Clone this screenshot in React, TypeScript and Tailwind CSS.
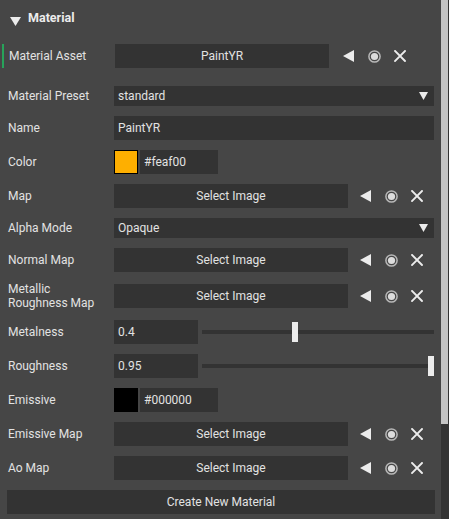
import React from 'react';

const font = { fontFamily: 'Roboto, "Liberation Sans", sans-serif' };

function PrevIcon() {
  return (
    <svg width="11" height="12" viewBox="0 0 11 12">
      <polygon points="11,0 11,12 0,6" fill="#ececec" />
    </svg>
  );
}

function PickIcon() {
  return (
    <svg width="13" height="13" viewBox="0 0 13 13">
      <circle cx="6.5" cy="6.5" r="5.6" fill="none" stroke="#b8b8b8" strokeWidth="1.5" />
      <circle cx="6.5" cy="6.5" r="3.6" fill="#dcdcdc" />
    </svg>
  );
}

function ClearIcon() {
  return (
    <svg width="12" height="12" viewBox="0 0 12 12">
      <path d="M1 1L11 11M11 1L1 11" stroke="#ececec" strokeWidth="1.9" strokeLinecap="square" />
    </svg>
  );
}

function AssetIcons() {
  return (
    <div className="flex shrink-0">
      <div className="w-[26px] flex justify-center items-center"><PrevIcon /></div>
      <div className="w-[26px] flex justify-center items-center"><PickIcon /></div>
      <div className="w-[26px] flex justify-center items-center"><ClearIcon /></div>
    </div>
  );
}

function Label({ children }: { children: React.ReactNode }) {
  return <div className="w-[106px] shrink-0 text-[12px] leading-[14px] text-[#e2e2e2]">{children}</div>;
}

function ImageRow({ label, tall }: { label: React.ReactNode; tall?: boolean }) {
  return (
    <div className={`flex items-center ${tall ? 'h-[28px]' : 'h-6'}`}>
      <Label>{label}</Label>
      <button className="flex-1 h-6 bg-[#333333] text-[12px] text-[#e2e2e2] text-center">Select Image</button>
      <div className="w-[86px] pl-[4px] flex">
        <AssetIcons />
      </div>
    </div>
  );
}

function SelectRow({ label, value }: { label: string; value: string }) {
  return (
    <div className="flex items-center h-5">
      <Label>{label}</Label>
      <div className="flex-1 h-5 bg-[#333333] flex items-center justify-between pl-1 pr-[6px] text-[12px] text-[#e2e2e2]">
        <span>{value}</span>
        <svg width="9" height="8" viewBox="0 0 9 8">
          <polygon points="0,0 9,0 4.5,8" fill="#ececec" />
        </svg>
      </div>
    </div>
  );
}

function ColorRow({ label, swatch, hex }: { label: string; swatch: string; hex: string }) {
  return (
    <div className="flex items-center h-6">
      <Label>{label}</Label>
      <div className={`w-6 h-6 border border-black ${swatch}`} />
      <div className="ml-[2px] w-[78px] h-6 bg-[#333333] flex items-center pl-1 text-[12px] text-[#e2e2e2]">{hex}</div>
    </div>
  );
}

function SliderRow({ label, value, thumb }: { label: string; value: string; thumb: string }) {
  return (
    <div className="flex items-center h-6">
      <Label>{label}</Label>
      <div className="w-[84px] h-6 bg-[#333333] flex items-center pl-1 text-[12px] text-[#e2e2e2]">{value}</div>
      <div className="flex-1 ml-[4px] relative h-5 flex items-center">
        <div className="w-full h-1 bg-[#333333]" />
        <div className={`absolute top-0 w-[6px] h-5 bg-[#ececec] ${thumb}`} />
      </div>
    </div>
  );
}

export default function App() {
  return (
    <div className="w-[449px] h-[519px] bg-[#464646] flex overflow-hidden" style={font}>
      <div className="flex-1 flex flex-col">
        {/* Header */}
        <div className="h-[36px] flex items-center pl-[10px] gap-[7px]">
          <svg width="11" height="9" viewBox="0 0 11 9" className="mt-[6px]">
            <polygon points="0,0 11,0 5.5,9" fill="#ececec" />
          </svg>
          <span className="text-[12.5px] font-bold text-[#ececec]">Material</span>
        </div>

        {/* Material Asset */}
        <div className="mt-[8px] flex items-center h-6 pl-[2px]">
          <div className="w-[2px] h-6 bg-[#27a35a]" />
          <div className="ml-[5px] w-[106px] shrink-0 text-[12px] text-[#e2e2e2]">Material Asset</div>
          <button className="w-[214px] h-6 bg-[#333333] text-[12px] text-[#e2e2e2] text-center">PaintYR</button>
          <div className="ml-[6px]">
            <AssetIcons />
          </div>
        </div>

        <div className="mt-[18px] pl-2 pr-[7px] flex flex-col gap-[10px]">
          <SelectRow label="Material Preset" value="standard" />
          <div className="flex items-center h-6">
            <Label>Name</Label>
            <div className="flex-1 h-6 bg-[#333333] flex items-center pl-1 text-[12px] text-[#e2e2e2]">PaintYR</div>
          </div>
          <ColorRow label="Color" swatch="bg-[#feaf00]" hex="#feaf00" />
          <ImageRow label="Map" />
          <SelectRow label="Alpha Mode" value="Opaque" />
          <ImageRow label="Normal Map" />
          <ImageRow label={<>Metallic<br />Roughness Map</>} tall />
          <SliderRow label="Metalness" value="0.4" thumb="left-[90px]" />
          <SliderRow label="Roughness" value="0.95" thumb="right-0" />
          <ColorRow label="Emissive" swatch="bg-black" hex="#000000" />
          <ImageRow label="Emissive Map" />
          <ImageRow label="Ao Map" />
          <button className="-ml-px mr-[-1px] h-6 bg-[#333333] text-[12px] text-[#e2e2e2] text-center">Create New Material</button>
        </div>
      </div>

      {/* Scrollbar */}
      <div className="w-[8px] bg-[#333333] flex flex-col">
        <div className="w-[7px] h-[424px] bg-[#c4c4c4]" />
      </div>
    </div>
  );
}
